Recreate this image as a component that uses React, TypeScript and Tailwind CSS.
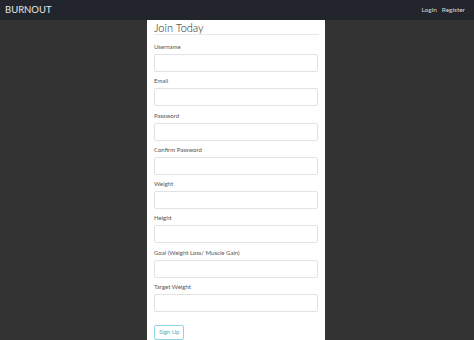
import React from 'react';

const fields = [
  'Username',
  'Email',
  'Password',
  'Confirm Password',
  'Weight',
  'Height',
  'Goal (Weight Loss/ Muscle Gain)',
  'Target Weight',
];

export default function App() {
  return (
    <div className="w-[474px] h-[340px] overflow-hidden bg-[#333333] flex flex-col font-['Lato','Open_Sans',sans-serif]">
      {/* 导航栏 */}
      <nav className="h-[20px] shrink-0 bg-[#22252b] flex items-center justify-between px-[5px]">
        <span className="text-[9.5px] leading-none text-[#e8e8e8]">BURNOUT</span>
        <div className="flex gap-[5px] text-[6.5px] leading-none text-[#d8d8d8] pr-[4px]">
          <span>Login</span>
          <span>Register</span>
        </div>
      </nav>

      <div className="flex-1 flex justify-start pl-[147px]">
        <div className="w-[178px] bg-white px-[7px] h-full">
          <div className="border-b border-[#e8e8e8] h-[15px] mr-[-1px]">
            <h1 className="text-[11px] leading-[13px] pt-[1px] font-light text-[#222]">Join Today</h1>
          </div>
          <form className="mt-[7px] w-[164px]">
            {fields.map((f) => (
              <div key={f} className="mb-[4.25px]">
                <label className="block text-[6px] leading-[10px] text-[#555] mb-[2px]">{f}</label>
                <input className="block w-full h-[18px] border border-[#e2e2e2] rounded-[2px] bg-white" />
              </div>
            ))}
            <button
              type="button"
              className="mt-[3px] h-[15px] px-[4px] border border-[#8fd5e0] rounded-[2px] text-[6px] leading-none text-[#3bb3c7]"
            >
              Sign Up
            </button>
          </form>
        </div>
      </div>
    </div>
  );
}
